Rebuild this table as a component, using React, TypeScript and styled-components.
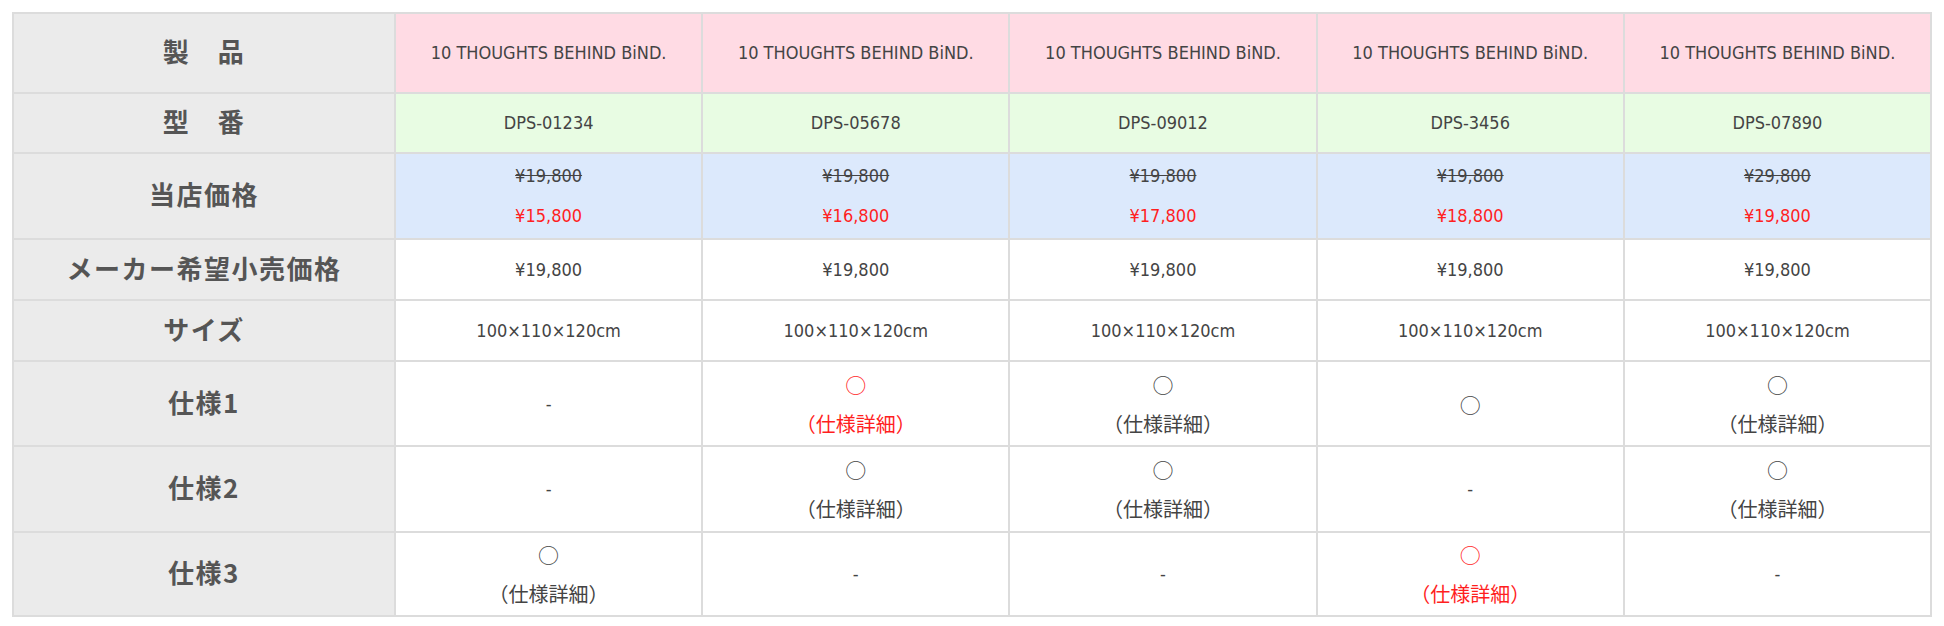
import styled, { createGlobalStyle } from "styled-components";

const GlobalStyle = createGlobalStyle`
  body {
    margin: 0;
    background: #fff;
  }
`;

const Page = styled.div`
  padding: 12px 0 0 12px;
`;

const Grid = styled.div`
  display: grid;
  width: 1920px;
  box-sizing: border-box;
  grid-template-columns: 380px repeat(5, 1fr);
  grid-template-rows: 78px 58px 84px 59px 59px 83px 84px 82px;
  gap: 2px;
  padding: 2px;
  background: #dcdcdc;
`;

const Label = styled.div`
  display: flex;
  align-items: center;
  justify-content: center;
  padding-bottom: 5px;
  background: #ebebeb;
  color: #555;
  font-family: "Noto Sans CJK JP", "Liberation Sans", sans-serif;
  font-weight: 700;
  font-size: 26px;
  letter-spacing: 1.5px;
  white-space: pre;
`;

const tones = {
  pink: "#ffdbe4",
  green: "#e8fce3",
  blue: "#dce9fc",
  white: "#ffffff",
};

const Cell = styled.div<{ $tone: keyof typeof tones }>`
  display: flex;
  flex-direction: column;
  align-items: center;
  justify-content: center;
  background: ${(p) => tones[p.$tone]};
  color: #444;
  font-family: "Liberation Sans Narrow", "DejaVu Sans Condensed", "Noto Sans CJK JP", sans-serif;
  font-size: 18px;
  line-height: 40px;
`;

const Old = styled.span`
  text-decoration: line-through;
`;

const Red = styled.span`
  color: #ff1f1f;
`;

const Mark = styled.span<{ $red?: boolean }>`
  font-family: "Noto Sans CJK JP", sans-serif;
  font-size: 21px;
  color: ${(p) => (p.$red ? "#ff1f1f" : "#444")};
`;

const Detail = styled.span<{ $red?: boolean }>`
  font-family: "Noto Sans CJK JP", sans-serif;
  font-size: 20px;
  color: ${(p) => (p.$red ? "#ff1f1f" : "#444")};
`;

type Spec = "-" | "o" | "od" | "rd";

const prices = [
  ["¥19,800", "¥15,800"],
  ["¥19,800", "¥16,800"],
  ["¥19,800", "¥17,800"],
  ["¥19,800", "¥18,800"],
  ["¥29,800", "¥19,800"],
];

const models = ["DPS-01234", "DPS-05678", "DPS-09012", "DPS-3456", "DPS-07890"];

const specs: { label: string; values: Spec[] }[] = [
  { label: "仕様1", values: ["-", "rd", "od", "o", "od"] },
  { label: "仕様2", values: ["-", "od", "od", "-", "od"] },
  { label: "仕様3", values: ["od", "-", "-", "rd", "-"] },
];

const SpecCell = ({ v }: { v: Spec }) => (
  <Cell $tone="white">
    {v === "-" && <span>-</span>}
    {v !== "-" && <Mark $red={v === "rd"}>○</Mark>}
    {(v === "od" || v === "rd") && <Detail $red={v === "rd"}>（仕様詳細）</Detail>}
  </Cell>
);

const App = () => {
  return (
    <Page>
      <GlobalStyle />
      <Grid>
        <Label>製　品</Label>
        {models.map((m) => (
          <Cell key={"p" + m} $tone="pink">
            10 THOUGHTS BEHIND BiND.
          </Cell>
        ))}

        <Label>型　番</Label>
        {models.map((m) => (
          <Cell key={m} $tone="green">
            {m}
          </Cell>
        ))}

        <Label>当店価格</Label>
        {prices.map(([was, now], i) => (
          <Cell key={i} $tone="blue">
            <Old>{was}</Old>
            <Red>{now}</Red>
          </Cell>
        ))}

        <Label>メーカー希望小売価格</Label>
        {models.map((m) => (
          <Cell key={"r" + m} $tone="white">
            ¥19,800
          </Cell>
        ))}

        <Label>サイズ</Label>
        {models.map((m) => (
          <Cell key={"s" + m} $tone="white">
            100×110×120cm
          </Cell>
        ))}

        {specs.map((s) => (
          <>
            <Label key={s.label}>{s.label}</Label>
            {s.values.map((v, i) => (
              <SpecCell key={s.label + i} v={v} />
            ))}
          </>
        ))}
      </Grid>
    </Page>
  );
};

export default App;
